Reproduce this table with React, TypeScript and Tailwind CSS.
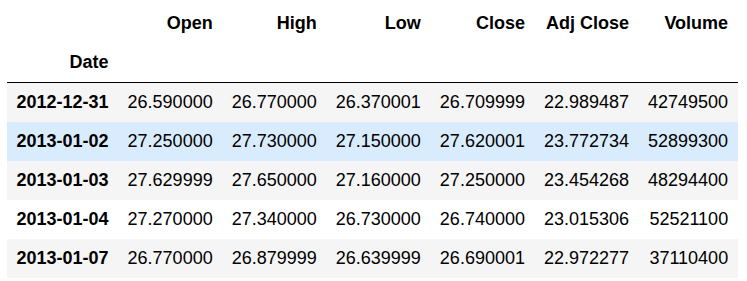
import React from 'react';

interface Row {
  date: string;
  values: string[];
  bg: string;
}

const columns = ['Open', 'High', 'Low', 'Close', 'Adj Close', 'Volume'];

const rows: Row[] = [
  { date: '2012-12-31', values: ['26.590000', '26.770000', '26.370001', '26.709999', '22.989487', '42749500'], bg: 'bg-[#f5f5f5]' },
  { date: '2013-01-02', values: ['27.250000', '27.730000', '27.150000', '27.620001', '23.772734', '52899300'], bg: 'bg-[#d9ecfd]' },
  { date: '2013-01-03', values: ['27.629999', '27.650000', '27.160000', '27.250000', '23.454268', '48294400'], bg: 'bg-[#f5f5f5]' },
  { date: '2013-01-04', values: ['27.270000', '27.340000', '26.730000', '26.740000', '23.015306', '52521100'], bg: 'bg-white' },
  { date: '2013-01-07', values: ['26.770000', '26.879999', '26.639999', '26.690001', '22.972277', '37110400'], bg: 'bg-[#f5f5f5]' },
];

const cell = 'px-[9.5px] py-[9px] leading-[21px] text-right whitespace-nowrap';

export default function App() {
  return (
    <div className="w-[747px] h-[281px] bg-white pl-[7px] pt-[4px] font-['Liberation_Sans',Arial,sans-serif] text-[18px] text-black">
      <table className="border-collapse border-spacing-0">
        <thead className="border-b border-black">
          <tr>
            <th className={`${cell} font-bold`}></th>
            {columns.map(c => (
              <th key={c} className={`${cell} font-bold`}>{c}</th>
            ))}
          </tr>
          <tr>
            <th className={`${cell} font-bold`}>Date</th>
            {columns.map(c => (
              <th key={c} className={cell}></th>
            ))}
          </tr>
        </thead>
        <tbody>
          {rows.map(r => (
            <tr key={r.date} className={r.bg}>
              <th className={`${cell} font-bold`}>{r.date}</th>
              {r.values.map((v, i) => (
                <td key={i} className={cell}>{v}</td>
              ))}
            </tr>
          ))}
        </tbody>
      </table>
    </div>
  );
}
